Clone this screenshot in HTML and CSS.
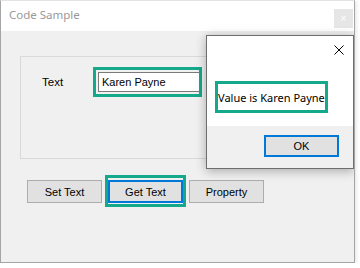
FILE: index.html
```html
<!DOCTYPE html>
<html lang="en">
<head>
    <meta charset="UTF-8">
    <title>Code Sample</title>
    <link rel="stylesheet" href="styles.css">
</head>
<body>

<div class="window">
    <div class="titlebar">
        <span class="title">Code Sample</span>
        <span class="title-close">&#215;</span>
    </div>
    <div class="content">
        <div class="group">
            <div class="field-row">
                <span class="label">Text</span>
                <div class="hl hl-input">
                    <div class="textbox">Karen Payne</div>
                </div>
            </div>
        </div>
        <div class="buttons">
            <button class="btn">Set Text</button>
            <div class="hl hl-btn">
                <button class="btn focused">Get Text</button>
            </div>
            <button class="btn">Property</button>
        </div>
    </div>

    <!-- message box shown over the form -->
    <div class="dialog">
        <div class="dlg-body">
            <div class="dlg-close">
                <svg width="10" height="10" viewBox="0 0 10 10">
                    <path d="M0.5 0.5 L9.5 9.5 M9.5 0.5 L0.5 9.5" stroke="#000" stroke-width="1" fill="none"/>
                </svg>
            </div>
            <div class="hl hl-msg">Value is Karen Payne</div>
        </div>
        <div class="dlg-foot">
            <button class="btn ok focused">OK</button>
        </div>
    </div>
</div>

</body>
</html>
```

FILE: styles.css
```css
body {
    margin: 0;
    background: #fff;
    font-family: "Liberation Sans", Arial, sans-serif;
    font-size: 11px;
}

.window {
    position: relative;
    width: 353px;
    height: 261px;
    border: 1px solid #a5a5a5;
    border-top-color: #e3e3e3;
    box-shadow: 1px 1px 4px rgba(0, 0, 0, 0.12);
    overflow: hidden;
}

.titlebar {
    height: 30px;
    background: #fff;
    display: flex;
    align-items: flex-start;
    justify-content: space-between;
}

.title {
    margin: 6px 0 0 8px;
    font-family: "Noto Sans", "Open Sans", sans-serif;
    font-size: 11.5px;
    color: #999;
}

.title-close {
    width: 19px;
    height: 19px;
    margin: 8px 1px 0 0;
    background: #e6e6e6;
    color: #fff;
    font-size: 10px;
    line-height: 19px;
    text-align: center;
}

.content {
    height: 206px;
    background: #f0f0f0;
    padding: 25px 0 0 0;
}

.group {
    width: 290px;
    height: 91px;
    margin-left: 19px;
    padding: 10px 0 0 21px;
    border: 1px solid #d9d9d9;
}

.field-row {
    display: flex;
    align-items: center;
}

.label {
    width: 51px;
    font-size: 11.5px;
    color: #000;
}

.hl {
    border: 3px solid #14a98b;
}

.hl-input {
    width: 101px;
    padding: 2px 0 2px 2px;
}

.textbox {
    height: 18px;
    line-height: 18px;
    padding-left: 3px;
    border: 1px solid #7a7a7a;
    border-right: none;
    background: #fff;
    color: #000;
}

.buttons {
    display: flex;
    align-items: flex-start;
    gap: 3px;
    margin: 21px 0 0 26px;
}

.btn {
    width: 75px;
    height: 23px;
    padding: 0;
    border: 1px solid #adadad;
    background: #e1e1e1;
    font-family: "Liberation Sans", Arial, sans-serif;
    font-size: 11px;
    color: #000;
}

.btn.focused {
    border: 2px solid #0078d7;
}

.hl-btn {
    margin-top: -5px;
    padding: 2px 0 1px 0;
}

.dialog {
    position: absolute;
    left: 205px;
    top: 34px;
    width: 146px;
    height: 132px;
    border: 1px solid #6e6e6e;
    background: #f0f0f0;
    box-shadow: 0 2px 10px rgba(0, 0, 0, 0.3);
}

.dlg-body {
    height: 90px;
    background: #fff;
    padding-left: 8px;
}

.dlg-close {
    display: flex;
    justify-content: flex-end;
    padding: 9px 9px 0 0;
    height: 10px;
}

.hl-msg {
    width: 107px;
    height: 26px;
    margin-top: 26px;
    font-family: "Noto Sans", "Open Sans", sans-serif;
    font-size: 11px;
    line-height: 28px;
    color: #000;
    white-space: nowrap;
}

.dlg-foot {
    display: flex;
    justify-content: flex-end;
    padding: 9px 14px 0 0;
}

.btn.ok {
    height: 22px;
}
```
